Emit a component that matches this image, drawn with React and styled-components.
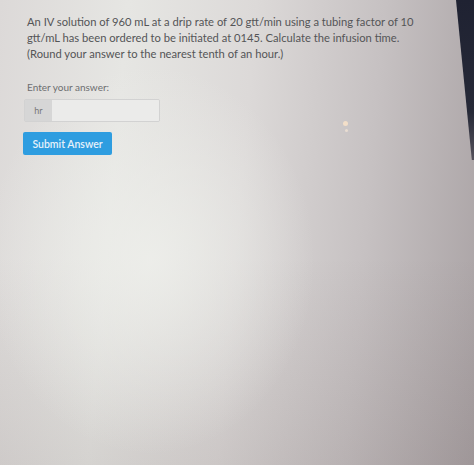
import React from "react";
import styled, { createGlobalStyle } from "styled-components";

const GlobalStyle = createGlobalStyle`
  html, body {
    margin: 0;
    padding: 0;
  }
  body {
    width: 474px;
    height: 465px;
    overflow: hidden;
    font-family: Lato, "Open Sans", sans-serif;
  }
`;

const Screen = styled.div`
  position: relative;
  width: 474px;
  height: 465px;
  box-sizing: border-box;
  padding: 14px 0 0 27px;
  background:
    radial-gradient(ellipse 220px 260px at 150px 260px, rgba(238, 239, 235, 0.85), rgba(238, 239, 235, 0) 75%),
    linear-gradient(180deg, rgba(0, 0, 0, 0) 0%, rgba(0, 0, 0, 0) 55%, rgba(60, 40, 40, 0.1) 100%),
    linear-gradient(95deg, #dcd9d8 0%, #e6e6e3 25%, #dcd9d8 50%, #c6c1c2 75%, #aaa3a5 100%);
`;

const Edge = styled.div`
  position: absolute;
  top: 0;
  right: 0;
  width: 18px;
  height: 160px;
  background: linear-gradient(180deg, #1f2232 0%, #262937 70%, #55525c 100%);
  clip-path: polygon(0 0, 100% 0, 100% 100%, 88% 100%);
`;

const Question = styled.p`
  margin: 0;
  width: 396px;
  font-size: 11.2px;
  line-height: 16px;
  color: #545557;
`;

const Label = styled.div`
  margin-top: 19px;
  font-size: 10px;
  color: #6d6e70;
`;

const InputGroup = styled.div`
  display: flex;
  margin: 6px 0 0 -3px;
  width: 136px;
  height: 23px;
  border: 1px solid #d2d2d2;
  border-radius: 2px;
  box-sizing: border-box;
  overflow: hidden;
`;

const Addon = styled.span`
  display: flex;
  align-items: center;
  justify-content: center;
  width: 27px;
  background: #d6d6d6;
  font-size: 9px;
  color: #777;
`;

const Field = styled.input`
  flex: 1;
  min-width: 0;
  border: none;
  outline: none;
  background: #ebebea;
  padding: 0 6px;
`;

const SubmitButton = styled.button`
  display: block;
  margin: 10px 0 0 -4px;
  width: 89px;
  height: 23px;
  border: none;
  border-radius: 2px;
  background: #2e9de0;
  color: #e6f1fa;
  font-family: Lato, "Open Sans", sans-serif;
  font-size: 10.5px;
  font-weight: 600;
  padding: 0;
  cursor: pointer;
`;

const Glare = styled.div`
  position: absolute;
  left: 343px;
  top: 121px;
  width: 5px;
  height: 5px;
  border-radius: 50%;
  background: #f3dfc9;
  box-shadow: 1px 7px 0 -1px #e9ddd2;
`;

const App = () => {
  return (
    <Screen>
      <GlobalStyle />
      <Edge />
      <Question>
        An IV solution of 960 mL at a drip rate of 20 gtt/min using a tubing factor of 10
        gtt/mL has been ordered to be initiated at 0145. Calculate the infusion time.
        (Round your answer to the nearest tenth of an hour.)
      </Question>
      <Label>Enter your answer:</Label>
      <InputGroup>
        <Addon>hr</Addon>
        <Field type="text" />
      </InputGroup>
      <SubmitButton>Submit Answer</SubmitButton>
      <Glare />
    </Screen>
  );
};

export default App;
